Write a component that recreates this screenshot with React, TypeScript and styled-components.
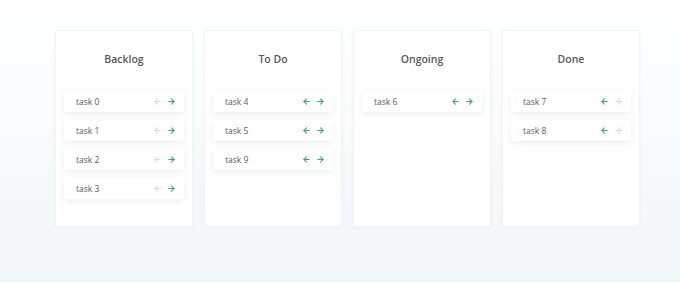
import * as React from 'react';
import styled, { createGlobalStyle } from 'styled-components';
import { ArrowLeft, ArrowRight } from 'lucide-react';

const GlobalStyle = createGlobalStyle`
    html, body {
        margin: 0;
        height: 100%;
    }
    body {
        font-family: "Open Sans", "Liberation Sans", sans-serif;
        background: linear-gradient(180deg, #ffffff 0%, #f1f6f8 100%);
        min-height: 282px;
    }
`

const Board = styled.div`
    display: grid;
    grid-template-columns: repeat(4, 1fr);
    column-gap: 11px;
    width: 585px;
    margin: 0 0 0 55px;
    padding-top: 30px;
    box-sizing: border-box;
`

const Column = styled.div`
    height: 197px;
    background: #ffffff;
    border: 1px solid #f1f4f6;
    border-radius: 2px;
    box-shadow: 0 1px 4px rgba(40, 70, 90, 0.03);
    padding: 20px 8px 0;
    box-sizing: border-box;
    display: flex;
    flex-direction: column;
`

const Title = styled.h2`
    margin: 0 0 24px;
    font-size: 10.5px;
    line-height: 16px;
    font-weight: 600;
    color: #53585c;
    text-align: center;
`

const List = styled.div`
    display: flex;
    flex-direction: column;
    gap: 8px;
`

const Card = styled.div`
    height: 21px;
    display: flex;
    align-items: center;
    justify-content: space-between;
    padding: 0 8px 0 12px;
    background: #ffffff;
    border-radius: 2px;
    box-shadow: 0 2px 6px rgba(30, 50, 60, 0.09);
`

const Label = styled.span`
    font-size: 8.5px;
    color: #555b5f;
`

const Actions = styled.div`
    display: flex;
    align-items: center;
    gap: 5px;
`

const Arrow = styled.button<{ $off?: boolean }>`
    border: 0;
    background: none;
    padding: 0;
    width: 9px;
    height: 9px;
    display: flex;
    align-items: center;
    justify-content: center;
    color: ${p => (p.$off ? '#cfe0d8' : '#3f9d74')};
    cursor: ${p => (p.$off ? 'default' : 'pointer')};
`

const columns = [
    { title: 'Backlog', tasks: ['task 0', 'task 1', 'task 2', 'task 3'] },
    { title: 'To Do', tasks: ['task 4', 'task 5', 'task 9'] },
    { title: 'Ongoing', tasks: ['task 6'] },
    { title: 'Done', tasks: ['task 7', 'task 8'] },
]

export default function App() {
    return (
        <>
            <GlobalStyle />
            <Board>
                {columns.map((col, i) => (
                    <Column key={col.title}>
                        <Title>{col.title}</Title>
                        <List>
                            {col.tasks.map(t => (
                                <Card key={t}>
                                    <Label>{t}</Label>
                                    <Actions>
                                        <Arrow $off={i === 0}>
                                            <ArrowLeft size={9} strokeWidth={2.8} />
                                        </Arrow>
                                        <Arrow $off={i === columns.length - 1}>
                                            <ArrowRight size={9} strokeWidth={2.8} />
                                        </Arrow>
                                    </Actions>
                                </Card>
                            ))}
                        </List>
                    </Column>
                ))}
            </Board>
        </>
    );
}
